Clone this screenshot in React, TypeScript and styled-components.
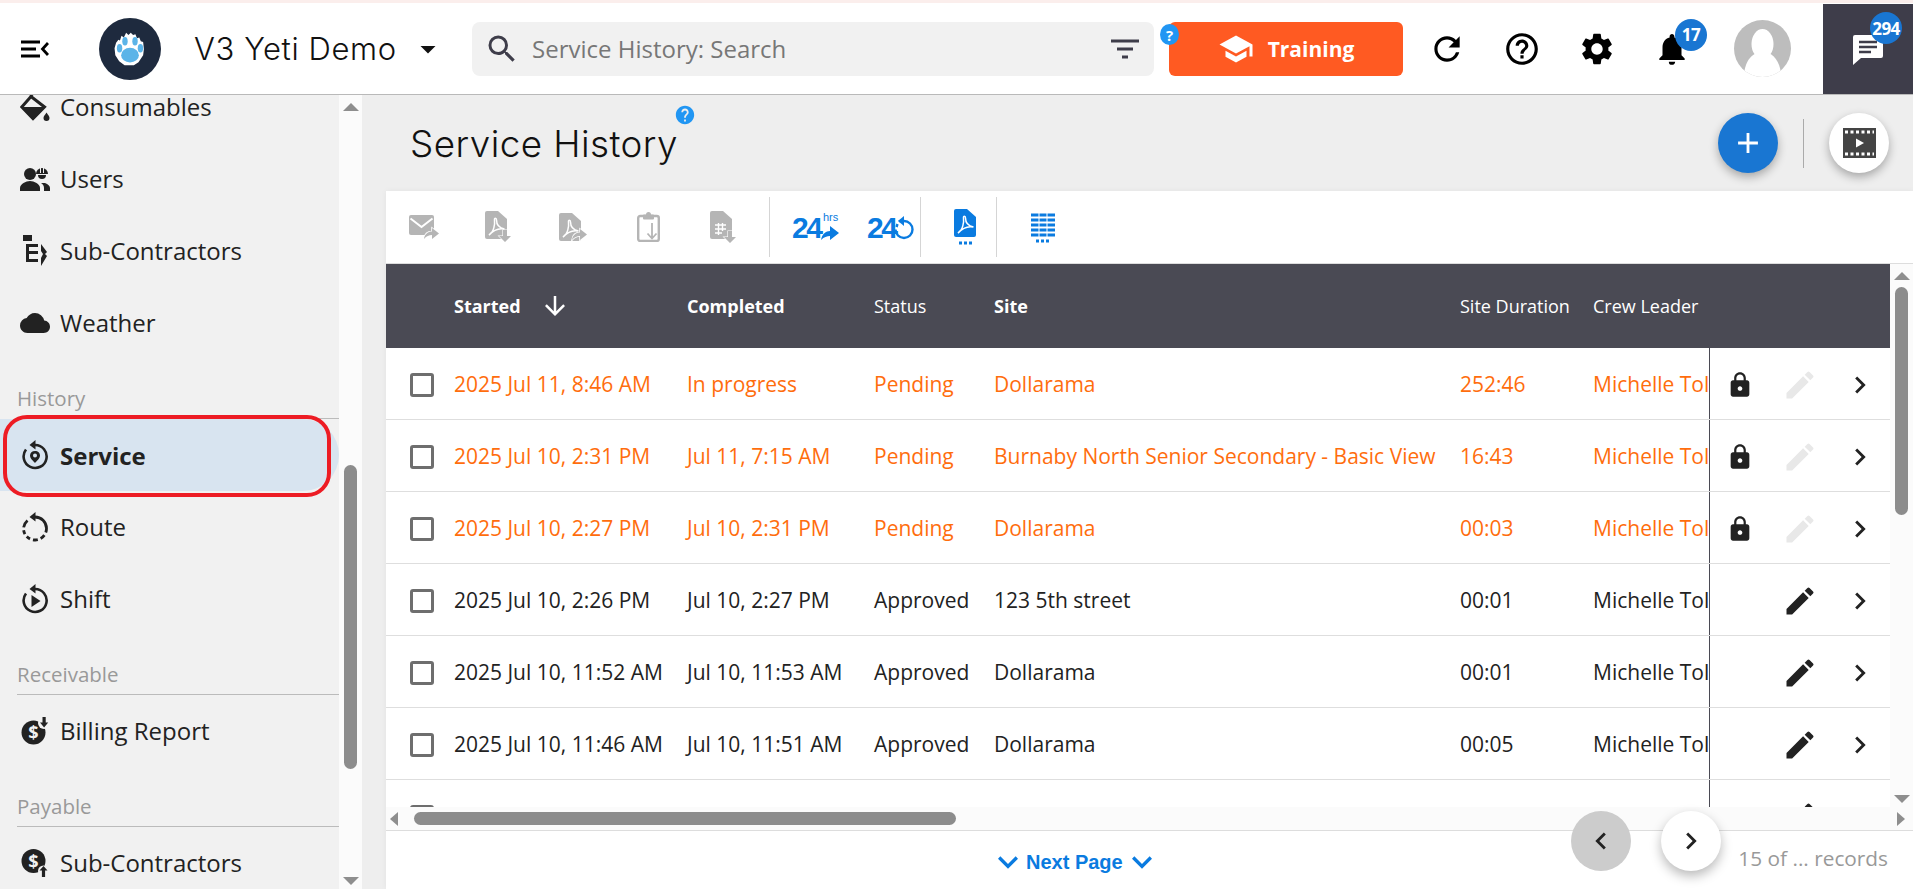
import React from 'react';
import styled, { createGlobalStyle } from 'styled-components';
import {
  MdAdd,
  MdArrowDownward,
  MdChevronLeft,
  MdChevronRight,
  MdCloud,
  MdEdit,
  MdHelp,
  MdHelpOutline,
  MdKeyboardArrowDown,
  MdLock,
  MdNotifications,
  MdRefresh,
  MdSchool,
  MdSearch,
  MdSettings,
  MdArrowDropDown,
} from 'react-icons/md';

const GlobalStyle = createGlobalStyle`
  html, body {
    margin: 0;
    padding: 0;
    height: 889px;
    overflow: hidden;
    background: #eeeeee;
    font-family: "Open Sans", "Liberation Sans", sans-serif;
  }
  * { box-sizing: border-box; }
`;

const Page = styled.div`
  width: 1913px;
  height: 889px;
  display: flex;
  flex-direction: column;
  overflow: hidden;
`;

const TopStrip = styled.div`
  height: 3px;
  background: #fbeeec;
  flex: none;
`;

const Header = styled.header`
  height: 92px;
  flex: none;
  display: flex;
  align-items: center;
  background: #fff;
  border-bottom: 1px solid #b9b9b9;
  position: relative;
`;

const MenuButton = styled.div`
  width: 99px;
  padding-left: 21px;
  display: flex;
  align-items: center;
`;

const Logo = styled.div`
  width: 62px;
  height: 62px;
  border-radius: 50%;
  background: #1e2a3e;
  display: flex;
  align-items: center;
  justify-content: center;
  flex: none;
`;

const OrgName = styled.div`
  margin-left: 33px;
  width: 202px;
  font-family: Inter, "Open Sans", sans-serif;
  font-size: 31px;
  font-weight: 300;
  letter-spacing: 0.6px;
  color: #111;
  white-space: nowrap;
`;

const OrgCaret = styled.div`
  width: 76px;
  padding-left: 14px;
  display: flex;
  color: #111;
`;

const SearchBox = styled.div`
  width: 682px;
  height: 54px;
  border-radius: 8px;
  background: #f1f1f1;
  display: flex;
  align-items: center;
  padding: 0 15px 0 12px;
  color: #3e3d4a;
`;

const SearchText = styled.span`
  margin-left: 12px;
  flex: 1;
  font-size: 24px;
  color: #777;
`;

const HelpDot = styled.div`
  width: 19px;
  height: 21px;
  border-radius: 50%;
  background: #2196f3;
  color: #fff;
  font-size: 15px;
  font-weight: 700;
  display: flex;
  align-items: center;
  justify-content: center;
  position: absolute;
  left: 1160px;
  top: 21px;
  z-index: 2;
`;

const TrainingButton = styled.div`
  margin-left: 15px;
  width: 234px;
  height: 54px;
  border-radius: 6px;
  background: #ff5a22;
  color: #fff;
  display: flex;
  align-items: center;
  justify-content: center;
  gap: 14px;
  font-size: 21px;
  font-weight: 700;
`;

const HeaderIcons = styled.div`
  display: flex;
  align-items: center;
  margin-left: 6px;
`;

const HeaderIcon = styled.div`
  width: 75px;
  height: 54px;
  display: flex;
  align-items: center;
  justify-content: center;
  color: #000;
  position: relative;
`;

const Badge = styled.span`
  position: absolute;
  width: 32px;
  height: 32px;
  border-radius: 50%;
  background: #1976d2;
  color: #fff;
  font-size: 17px;
  font-weight: 700;
  letter-spacing: -0.5px;
  display: flex;
  align-items: center;
  justify-content: center;
  left: ${({ $left }: { $left: number; $top: number }) => $left}px;
  top: ${({ $top }: { $left: number; $top: number }) => $top}px;
`;

const Avatar = styled.div`
  width: 57px;
  height: 57px;
  margin-left: 25px;
  border-radius: 50%;
  background: #bdbdbd;
  overflow: hidden;
  flex: none;
`;

const ChatBox = styled.div`
  position: absolute;
  right: 0;
  top: 1px;
  bottom: 0;
  width: 90px;
  background: #3e3d4a;
  color: #fff;
  display: flex;
  align-items: center;
  justify-content: center;
`;

const Shell = styled.div`
  flex: 1;
  display: flex;
  min-height: 0;
`;

const Sidebar = styled.aside`
  width: 362px;
  flex: none;
  display: flex;
  background: #f1f1f1;
`;

const NavList = styled.nav`
  width: 339px;
  overflow: hidden;
`;

const NavInner = styled.div`
  margin-top: -24px;
`;

const NavRow = styled.div<{ $active?: boolean }>`
  height: 72px;
  display: flex;
  align-items: center;
  gap: 10px;
  padding-left: 20px;
  font-size: 24px;
  color: #222;
  position: relative;
  font-weight: ${({ $active }) => ($active ? 700 : 400)};
  background: ${({ $active }) => ($active ? '#d8e4f0' : 'transparent')};
  border-radius: ${({ $active }) => ($active ? '0 36px 36px 0' : '0')};
`;

const NavLabel = styled.span<{ $active?: boolean }>`
  margin-top: ${({ $active }) => ($active ? 0 : -2)}px;
`;

const RedMark = styled.span`
  position: absolute;
  left: 3px;
  top: -4px;
  width: 328px;
  height: 82px;
  border: 4px solid #ed1c24;
  border-radius: 24px;
`;

const NavIcon = styled.span`
  width: 30px;
  height: 30px;
  flex: none;
  display: flex;
  align-items: center;
  justify-content: center;
  color: #222;
`;

const NavSection = styled.div`
  height: 60px;
  margin-left: 17px;
  padding-bottom: 6px;
  display: flex;
  align-items: flex-end;
  font-size: 20.5px;
  color: #999;
  border-bottom: 1px solid #bbb;
`;

const ScrollTrack = styled.div<{ $vertical?: boolean }>`
  background: #fbfbfb;
  display: flex;
  flex-direction: ${({ $vertical }) => ($vertical ? 'column' : 'row')};
  align-items: center;
  flex: none;
`;

const SideTrack = styled(ScrollTrack)`
  width: 23px;
  height: 794px;
`;

const CardTrack = styled(ScrollTrack)`
  width: 23px;
  height: 543px;
`;

const Arrow = styled.span<{ $dir: 'up' | 'down' | 'left' | 'right' }>`
  width: 0;
  height: 0;
  flex: none;
  border-style: solid;
  border-color: transparent;
  border-width: ${({ $dir }) => ($dir === 'up' || $dir === 'down' ? '0 8px' : '7px 0')};
  ${({ $dir }) => `border-${{ up: 'bottom', down: 'top', left: 'right', right: 'left' }[$dir]}: 8px solid #8e8e8e;`}
`;

const Thumb = styled.span`
  background: #8c8c8c;
  border-radius: 7px;
  flex: none;
`;

const SideThumb = styled(Thumb)`
  width: 13px;
  height: 304px;
  margin-top: 354px;
`;

const TopArrow = styled(Arrow)`
  margin-top: 8px;
`;

const BottomArrow = styled(Arrow)`
  margin-top: auto;
  margin-bottom: 4px;
`;

const CardThumb = styled(Thumb)`
  width: 13px;
  height: 228px;
  margin-top: 7px;
`;

const Main = styled.main`
  flex: 1;
  min-width: 0;
  display: flex;
  flex-direction: column;
`;

const TitleBar = styled.div`
  height: 96px;
  flex: none;
  display: flex;
  align-items: center;
  padding: 0 24px 0 48px;
`;

const Title = styled.h1`
  margin: 0;
  font-family: Inter, "Open Sans", sans-serif;
  font-size: 36.8px;
  font-weight: 300;
  letter-spacing: 0.45px;
  color: #111;
`;

const TitleHelp = styled.span`
  align-self: flex-start;
  margin: 9px 0 0 -4px;
  display: flex;
  color: #2196f3;
`;

const TitleActions = styled.div`
  margin-left: auto;
  display: flex;
  align-items: center;
`;

const RoundButton = styled.div<{ $blue?: boolean }>`
  width: 60px;
  height: 60px;
  border-radius: 50%;
  display: flex;
  align-items: center;
  justify-content: center;
  background: ${({ $blue }) => ($blue ? '#1976d2' : '#fff')};
  color: ${({ $blue }) => ($blue ? '#fff' : '#444')};
  box-shadow: 0 4px 10px rgba(0, 0, 0, 0.3);
`;

const TitleDivider = styled.span`
  width: 1px;
  height: 49px;
  background: #aaa;
  margin: 0 25px;
`;

const Card = styled.section`
  flex: 1;
  margin-left: 24px;
  background: #fff;
  display: flex;
  flex-direction: column;
  min-height: 0;
  box-shadow: 0 0 6px rgba(0, 0, 0, 0.05);
`;

const Toolbar = styled.div`
  height: 73px;
  flex: none;
  display: flex;
  align-items: center;
  border-bottom: 1px solid #ddd;
`;

const ToolSlot = styled.div<{ $width: number; $margin?: number }>`
  width: ${({ $width }) => $width}px;
  margin-left: ${({ $margin }) => $margin || 0}px;
  display: flex;
  justify-content: center;
  flex: none;
`;

const ToolSeparator = styled.span`
  width: 1px;
  height: 60px;
  background: #d5d5d5;
  flex: none;
`;

const GapSeparator = styled(ToolSeparator)`
  margin-left: 7px;
`;

const TableArea = styled.div`
  height: 543px;
  flex: none;
  display: flex;
`;

const Table = styled.div`
  flex: 1;
  min-width: 0;
  overflow: hidden;
`;

const gridColumns = '68px 233px 187px 120px 466px 133px 116px 181px';

const HeadRow = styled.div`
  display: grid;
  grid-template-columns: ${gridColumns};
  height: 84px;
  align-items: center;
  background: #4a4a54;
  color: #fff;
  font-size: 18px;
`;

const HeadCell = styled.div<{ $bold?: boolean }>`
  font-weight: ${({ $bold }) => ($bold ? 700 : 400)};
  display: flex;
  align-items: center;
  gap: 19px;
  white-space: nowrap;
`;

const BodyRow = styled.div<{ $pending?: boolean }>`
  display: grid;
  grid-template-columns: ${gridColumns};
  height: 72px;
  align-items: center;
  font-size: 21px;
  white-space: nowrap;
  color: ${({ $pending }) => ($pending ? '#ff6d0d' : '#222')};
  border-bottom: 1px solid #dedede;
`;

const CheckCell = styled.div`
  display: flex;
  justify-content: flex-end;
  padding: 2px 20px 0 0;
`;

const Checkbox = styled.span`
  width: 24px;
  height: 24px;
  border: 3px solid #6e6e6e;
  border-radius: 3px;
  display: block;
`;

const CrewCell = styled.div`
  overflow: hidden;
`;

const ActionCell = styled.div`
  height: 100%;
  display: grid;
  grid-template-columns: 60px 60px 60px;
  align-items: center;
  justify-items: center;
  border-left: 1px solid #4a4a54;
  color: #222;
`;

const MutedIcon = styled.span<{ $off?: boolean }>`
  display: flex;
  margin-top: 2px;
  color: ${({ $off }) => ($off ? '#e8e8e8' : '#222')};
`;

const HScroll = styled(ScrollTrack)`
  height: 24px;
  padding: 0 6px 0 2px;
  border-bottom: 1px solid #ddd;
`;

const HThumb = styled(Thumb)`
  width: 542px;
  height: 13px;
  margin-left: 16px;
`;

const RightArrow = styled(Arrow)`
  margin-left: auto;
  margin-right: 2px;
`;

const LeftArrow = styled(Arrow)`
  margin-left: 2px;
`;

const Footer = styled.div`
  flex: 1;
  display: flex;
  align-items: center;
  position: relative;
  padding-left: 603px;
`;

const NextPage = styled.div`
  display: flex;
  align-items: center;
  gap: 0;
  margin-top: 4px;
  color: #0a7be0;
  font-family: "Liberation Sans", Arial, sans-serif;
  font-weight: 700;
  font-size: 20px;
`;

const NextChevron = styled.span`
  display: flex;
  margin: 0 -2px 0 -1px;
`;

const Records = styled.div`
  margin-left: auto;
  margin-right: 25px;
  margin-top: -5px;
  font-size: 20.8px;
  color: #999;
`;

const PageButton = styled.div<{ $off?: boolean; $left: number }>`
  position: absolute;
  top: -20px;
  left: ${({ $left }) => $left}px;
  width: 60px;
  height: 60px;
  border-radius: 50%;
  display: flex;
  align-items: center;
  justify-content: center;
  color: #222;
  background: ${({ $off }) => ($off ? '#cccccc' : '#ffffff')};
  box-shadow: ${({ $off }) => ($off ? 'none' : '0 5px 12px rgba(0, 0, 0, 0.28)')};
`;

const CircleArrow = ({ variant }: { variant: 'pin' | 'dash' | 'play' }) => (
  <svg width="28" height="30" viewBox="0 0 28 30" fill="none">
    {variant === 'dash' ? (
      <path
        d="M14 5a11.500 11.500 0 1 1-11.500 12a11.500 11.500 0 0 1 4-8.500"
        stroke="#222"
        strokeWidth="2.800"
        strokeDasharray="22 3 5 3 5 3 4 3 4 3"
      />
    ) : (
      <path d="M14 5a11.500 11.500 0 1 1-9 4.500" stroke="#222" strokeWidth="2.600" />
    )}
    <path d="M14.500 0v9.500L8.500 5z" fill="#222" />
    {variant === 'pin' && (
      <path
        d="M14 11c-3 0-5 2-5 4.600 0 3 3.400 5.600 5 7.400 1.600-1.800 5-4.400 5-7.400 0-2.600-2-4.600-5-4.600zm0 6.600a2 2 0 1 1 0-4 2 2 0 0 1 0 4z"
        fill="#222"
      />
    )}
    {variant === 'play' && <path d="M10.500 11l9 6-9 6z" fill="#222" />}
  </svg>
);

const BucketIcon = () => (
  <svg width="30" height="30" viewBox="0 0 30 30">
    <path d="M9.500 1l3 3" stroke="#222" strokeWidth="3" />
    <path d="M11 4.500L1.800 15 13 26.500 24.500 15z" fill="none" stroke="#222" strokeWidth="3" />
    <path d="M1 15h24L13 28z" fill="#222" />
    <path d="M26.500 20.500c-1.600 2.500-3 3.800-3 5.500a3 3 0 0 0 6 0c0-1.700-1.400-3-3-5.500z" fill="#222" />
  </svg>
);

const UsersIcon = () => (
  <svg width="30" height="24" viewBox="0 0 30 24">
    <circle cx="10" cy="7" r="6" fill="#222" />
    <path d="M0 24v-3c0-4 6-7 10-7s10 3 10 7v3z" fill="#222" />
    <path d="M16 7a6 6 0 0 1 12 0z" fill="#222" />
    <path d="M18 8h8a4 4 0 0 1-8 0zM24 21v3h6v-3c0-2-2-4-5-5-1 0-3 0-4 0 2 1 3 3 3 5z" fill="#222" />
    <path d="M20.500 1v5M23.500 1v5" stroke="#f1f1f1" strokeWidth="1" />
  </svg>
);

const HierarchyIcon = () => (
  <svg width="26" height="32" viewBox="0 0 26 32">
    <rect x="1" y="0" width="9" height="6" fill="#222" />
    <path d="M4 9h12v3H7v4h9v3H7v5h9v3H4z" fill="#222" />
    <path d="M19 9l6 8-2 2 2 2-6 10v-8l2-4-2-3z" fill="#222" />
  </svg>
);

const MoneyIcon = ({ up }: { up?: boolean }) => (
  <svg width="28" height="28" viewBox="0 0 28 28">
    <circle cx="12.500" cy={up ? 12 : 15.500} r="12" fill="#222" />
    <text x="12.500" y={up ? 18.500 : 22} textAnchor="middle" fontSize="18" fontWeight="700" fill="#f1f1f1" fontFamily="Open Sans">
      $
    </text>
    {up ? (
      <>
        <circle cx="22.500" cy="22" r="5.500" fill="#f1f1f1" />
        <path d="M22.500 17l4 4.500h-2.400V28h-3.200v-6.500H18.500z" fill="#222" />
      </>
    ) : (
      <>
        <circle cx="23" cy="6" r="6" fill="#f1f1f1" />
        <path d="M21.500 0h3.200v5.500h2.500l-4.100 5-4.100-5h2.500z" fill="#222" />
      </>
    )}
  </svg>
);

const FileBody = ({ fill }: { fill: string }) => (
  <path d="M2 0h11l9 8v18a2 2 0 0 1-2 2H2a2 2 0 0 1-2-2V2a2 2 0 0 1 2-2z" fill={fill} />
);

const Swirl = ({ color }: { color: string }) => (
  <path d="M4 24c5-3 6-11 5.500-15-.3-2.500 2-2.500 2 0 0 5 3 8 8 9-5-1-11 1-15.500 6z" fill="none" stroke={color} strokeWidth="1.500" />
);

const GRAY = '#b5b5b5';
const BLUE = '#0a7be0';

const ShareMark = ({ x, y }: { x: number; y: number }) => (
  <path
    d={`M${x} ${y + 11}c.6-5 4-7.500 8-7.500V${y}l7 5.500-7 5.500V${y + 7}c-3 0-5.500 1-8 4z`}
    fill={GRAY}
    stroke="#fff"
    strokeWidth="1.500"
    paintOrder="stroke"
  />
);

const DownMark = ({ x, y }: { x: number; y: number }) => (
  <path d={`M${x + 3} ${y}h4v6h4l-6 6-6-6h4z`} fill={GRAY} stroke="#fff" strokeWidth="1.200" paintOrder="stroke" />
);

const MailTool = () => (
  <svg width="31" height="25" viewBox="0 0 31 25">
    <rect x="0" y="0" width="25" height="20" rx="2" fill={GRAY} />
    <path d="M1.500 3.500L12.500 12l11-8.500" fill="none" stroke="#fff" strokeWidth="2" />
    <ShareMark x={15} y={13} />
  </svg>
);

const PdfDownTool = () => (
  <svg width="28" height="32" viewBox="0 0 28 32">
    <FileBody fill={GRAY} />
    <Swirl color="#fff" />
    <DownMark x={15} y={19} />
  </svg>
);

const PdfShareTool = () => (
  <svg width="30" height="28" viewBox="0 0 30 28">
    <FileBody fill={GRAY} />
    <Swirl color="#fff" />
    <ShareMark x={13} y={16} />
  </svg>
);

const ClipboardTool = () => (
  <svg width="24" height="30" viewBox="0 0 24 30">
    <rect x="1.200" y="4" width="20.600" height="25" rx="2" fill="none" stroke={GRAY} strokeWidth="2.400" />
    <rect x="6" y="2.500" width="11" height="5" rx="1" fill={GRAY} />
    <circle cx="11.500" cy="2.500" r="2.500" fill={GRAY} />
    <path d="M15 11v15M10.500 21.500l4.500 5 4.500-5" fill="none" stroke={GRAY} strokeWidth="1.800" />
  </svg>
);

const SheetTool = () => (
  <svg width="28" height="33" viewBox="0 0 28 33">
    <FileBody fill={GRAY} />
    <path d="M5 14h11M5 18h11M5 22h7M8.500 12v12M12.500 12v8" stroke="#fff" strokeWidth="1.400" />
    <DownMark x={15} y={20} />
  </svg>
);

const HoursTool = () => (
  <svg width="48" height="40" viewBox="0 0 48 40">
    <text x="0" y="31" fontSize="30" fontWeight="700" letterSpacing="-2.500" fill={BLUE} fontFamily="Liberation Sans">
      24
    </text>
    <text x="31" y="14" fontSize="11" fill={BLUE} fontFamily="Liberation Sans">
      hrs
    </text>
    <path d="M29 33c1-6 5-9 9-9v-5l9 7-9 7v-4c-3 0-6 1-9 4z" fill={BLUE} />
  </svg>
);

const CycleTool = () => (
  <svg width="48" height="40" viewBox="0 0 48 40">
    <text x="0" y="31" fontSize="30" fontWeight="700" letterSpacing="-2.500" fill={BLUE} fontFamily="Liberation Sans">
      24
    </text>
    <path d="M37 14a8.500 8.500 0 1 1-8.500 8.500" fill="none" stroke={BLUE} strokeWidth="2.400" />
    <path d="M29.500 20l1-3M32 14.500l2-1" stroke={BLUE} strokeWidth="2.400" />
    <path d="M37 9v10l-6-5z" fill={BLUE} />
  </svg>
);

const PdfFileTool = () => (
  <svg width="24" height="38" viewBox="0 0 24 38">
    <g transform="translate(0 1)">
      <FileBody fill={BLUE} />
      <Swirl color="#fff" />
    </g>
    <path d="M5 35h3M10 35h3M15 35h3" stroke={BLUE} strokeWidth="3" />
  </svg>
);

const TableTool = () => (
  <svg width="24" height="32" viewBox="0 0 24 32">
    <path d="M0 4h24M0 9h24M0 14h24M0 19h24M0 24h24" stroke={BLUE} strokeWidth="3" />
    <path d="M8 2v24M16 2v24" stroke="#fff" strokeWidth="1" />
    <path d="M5 30h3M10 30h3M15 30h3" stroke={BLUE} strokeWidth="3" />
  </svg>
);

const MenuIcon = () => (
  <svg width="28" height="18" viewBox="0 0 28 18">
    <path d="M0 2h19M0 9h15M0 16h19" stroke="#000" strokeWidth="3.200" />
    <path d="M27 3l-5.500 6 5.500 6" fill="none" stroke="#000" strokeWidth="2.800" />
  </svg>
);

const PawIcon = () => (
  <svg width="36" height="34" viewBox="0 0 46 44">
    <path d="M5 14l3-4 2 1 2-6 3 2 3-6 3 3 3-3 3 3 3-1 2 5 3-1 2 5 3 1 1 9-1 8-6 9-6 4H16l-7-5-5-8-1-9z" fill="#fff" />
    <ellipse cx="23" cy="30" rx="11.500" ry="9.500" fill="#5bb4e8" />
    <ellipse cx="9.500" cy="21" rx="3.500" ry="5.500" fill="#5bb4e8" />
    <ellipse cx="16.500" cy="12" rx="3.500" ry="5.500" fill="#5bb4e8" />
    <ellipse cx="29.500" cy="12" rx="3.500" ry="5.500" fill="#5bb4e8" />
    <ellipse cx="36.500" cy="21" rx="3.500" ry="5.500" fill="#5bb4e8" />
  </svg>
);

const FilterIcon = () => (
  <svg width="28" height="20" viewBox="0 0 28 20">
    <path d="M0 2h28M6 10h16M11 18h6" stroke="#3e3d4a" strokeWidth="3" />
  </svg>
);

const AvatarFigure = () => (
  <svg width="57" height="57" viewBox="0 0 57 57">
    <ellipse cx="28.500" cy="24" rx="11" ry="15" fill="#fff" />
    <path d="M10 57c0-14 7-25 18.500-25S47 43 47 57z" fill="#fff" />
  </svg>
);

const ChatIcon = () => (
  <svg width="32" height="32" viewBox="0 0 32 32">
    <path d="M3 2h26a2 2 0 0 1 2 2v19a2 2 0 0 1-2 2H9l-8 7V4a2 2 0 0 1 2-2z" fill="#fff" />
    <path d="M7 9h18M7 14h18M7 19h12" stroke="#3e3d4a" strokeWidth="2.400" />
  </svg>
);

const FilmIcon = () => (
  <svg width="33" height="30" viewBox="0 0 33 30">
    <rect x="0" y="0" width="33" height="30" fill="#444" />
    <path d="M2 4h29M2 26h29" stroke="#fff" strokeWidth="3" strokeDasharray="3 2.500" />
    <path d="M13 10.500l8 4.500-8 4.500z" fill="#fff" />
  </svg>
);

type Row = {
  started: string;
  completed: string;
  status: string;
  site: string;
  duration: string;
};

const pendingRows: Row[] = [
  { started: '2025 Jul 11, 8:46 AM', completed: 'In progress', status: 'Pending', site: 'Dollarama', duration: '252:46' },
  { started: '2025 Jul 10, 2:31 PM', completed: 'Jul 11, 7:15 AM', status: 'Pending', site: 'Burnaby North Senior Secondary - Basic View', duration: '16:43' },
  { started: '2025 Jul 10, 2:27 PM', completed: 'Jul 10, 2:31 PM', status: 'Pending', site: 'Dollarama', duration: '00:03' },
];

const approvedRows: Row[] = [
  { started: '2025 Jul 10, 2:26 PM', completed: 'Jul 10, 2:27 PM', status: 'Approved', site: '123 5th street', duration: '00:01' },
  { started: '2025 Jul 10, 11:52 AM', completed: 'Jul 10, 11:53 AM', status: 'Approved', site: 'Dollarama', duration: '00:01' },
  { started: '2025 Jul 10, 11:46 AM', completed: 'Jul 10, 11:51 AM', status: 'Approved', site: 'Dollarama', duration: '00:05' },
];

const ServiceRow = ({ row, pending }: { row: Row; pending?: boolean }) => (
  <BodyRow $pending={pending}>
    <CheckCell>
      <Checkbox />
    </CheckCell>
    <div>{row.started}</div>
    <div>{row.completed}</div>
    <div>{row.status}</div>
    <div>{row.site}</div>
    <div>{row.duration}</div>
    <CrewCell>Michelle Tol</CrewCell>
    <ActionCell>
      <MutedIcon>{pending && <MdLock size={28} />}</MutedIcon>
      <MutedIcon $off={pending}>
        <MdEdit size={36} />
      </MutedIcon>
      <MutedIcon>
        <MdChevronRight size={34} />
      </MutedIcon>
    </ActionCell>
  </BodyRow>
);

export default function App() {
  return (
    <Page>
      <GlobalStyle />
      <TopStrip />
      <Header>
        <MenuButton>
          <MenuIcon />
        </MenuButton>
        <Logo>
          <PawIcon />
        </Logo>
        <OrgName>V3 Yeti Demo</OrgName>
        <OrgCaret>
          <MdArrowDropDown size={36} />
        </OrgCaret>
        <SearchBox>
          <MdSearch size={36} />
          <SearchText>Service History: Search</SearchText>
          <FilterIcon />
        </SearchBox>
        <HelpDot>?</HelpDot>
        <TrainingButton>
          <MdSchool size={36} />
          Training
        </TrainingButton>
        <HeaderIcons>
          <HeaderIcon>
            <MdRefresh size={38} />
          </HeaderIcon>
          <HeaderIcon>
            <MdHelpOutline size={38} />
          </HeaderIcon>
          <HeaderIcon>
            <MdSettings size={38} />
          </HeaderIcon>
          <HeaderIcon>
            <MdNotifications size={38} />
            <Badge $left={41} $top={-3}>
              17
            </Badge>
          </HeaderIcon>
        </HeaderIcons>
        <Avatar>
          <AvatarFigure />
        </Avatar>
        <ChatBox>
          <ChatIcon />
          <Badge $left={47} $top={8}>
            294
          </Badge>
        </ChatBox>
      </Header>
      <Shell>
        <Sidebar>
          <NavList>
            <NavInner>
              <NavRow>
                <NavIcon>
                  <BucketIcon />
                </NavIcon>
                <NavLabel>Consumables</NavLabel>
              </NavRow>
              <NavRow>
                <NavIcon>
                  <UsersIcon />
                </NavIcon>
                <NavLabel>Users</NavLabel>
              </NavRow>
              <NavRow>
                <NavIcon>
                  <HierarchyIcon />
                </NavIcon>
                <NavLabel>Sub-Contractors</NavLabel>
              </NavRow>
              <NavRow>
                <NavIcon>
                  <MdCloud size={32} />
                </NavIcon>
                <NavLabel>Weather</NavLabel>
              </NavRow>
              <NavSection>History</NavSection>
              <NavRow $active>
                <NavIcon>
                  <CircleArrow variant="pin" />
                </NavIcon>
                <NavLabel $active>Service</NavLabel>
                <RedMark />
              </NavRow>
              <NavRow>
                <NavIcon>
                  <CircleArrow variant="dash" />
                </NavIcon>
                <NavLabel>Route</NavLabel>
              </NavRow>
              <NavRow>
                <NavIcon>
                  <CircleArrow variant="play" />
                </NavIcon>
                <NavLabel>Shift</NavLabel>
              </NavRow>
              <NavSection>Receivable</NavSection>
              <NavRow>
                <NavIcon>
                  <MoneyIcon />
                </NavIcon>
                <NavLabel>Billing Report</NavLabel>
              </NavRow>
              <NavSection>Payable</NavSection>
              <NavRow>
                <NavIcon>
                  <MoneyIcon up />
                </NavIcon>
                <NavLabel>Sub-Contractors</NavLabel>
              </NavRow>
            </NavInner>
          </NavList>
          <SideTrack $vertical>
            <TopArrow $dir="up" />
            <SideThumb />
            <BottomArrow $dir="down" />
          </SideTrack>
        </Sidebar>
        <Main>
          <TitleBar>
            <Title>Service History</Title>
            <TitleHelp>
              <MdHelp size={22} />
            </TitleHelp>
            <TitleActions>
              <RoundButton $blue>
                <MdAdd size={34} />
              </RoundButton>
              <TitleDivider />
              <RoundButton>
                <FilmIcon />
              </RoundButton>
            </TitleActions>
          </TitleBar>
          <Card>
            <Toolbar>
              <ToolSlot $width={76}>
                <MailTool />
              </ToolSlot>
              <ToolSlot $width={74}>
                <PdfDownTool />
              </ToolSlot>
              <ToolSlot $width={76}>
                <PdfShareTool />
              </ToolSlot>
              <ToolSlot $width={74}>
                <ClipboardTool />
              </ToolSlot>
              <ToolSlot $width={76}>
                <SheetTool />
              </ToolSlot>
              <GapSeparator />
              <ToolSlot $width={92}>
                <HoursTool />
              </ToolSlot>
              <ToolSlot $width={58}>
                <CycleTool />
              </ToolSlot>
              <ToolSeparator />
              <ToolSlot $width={60} $margin={15}>
                <PdfFileTool />
              </ToolSlot>
              <ToolSeparator />
              <ToolSlot $width={92}>
                <TableTool />
              </ToolSlot>
            </Toolbar>
            <TableArea>
              <Table>
                <HeadRow>
                  <span />
                  <HeadCell $bold>
                    Started
                    <MdArrowDownward size={30} />
                  </HeadCell>
                  <HeadCell $bold>Completed</HeadCell>
                  <HeadCell>Status</HeadCell>
                  <HeadCell $bold>Site</HeadCell>
                  <HeadCell>Site Duration</HeadCell>
                  <HeadCell>Crew Leader</HeadCell>
                  <span />
                </HeadRow>
                {pendingRows.map((row) => (
                  <ServiceRow key={row.started} row={row} pending />
                ))}
                {approvedRows.map((row) => (
                  <ServiceRow key={row.started} row={row} />
                ))}
                <BodyRow>
                  <CheckCell>
                    <Checkbox />
                  </CheckCell>
                  <span />
                  <span />
                  <span />
                  <span />
                  <span />
                  <span />
                  <ActionCell>
                    <span />
                    <MutedIcon>
                      <MdEdit size={36} />
                    </MutedIcon>
                    <span />
                  </ActionCell>
                </BodyRow>
              </Table>
              <CardTrack $vertical>
                <TopArrow $dir="up" />
                <CardThumb />
                <BottomArrow $dir="down" />
              </CardTrack>
            </TableArea>
            <HScroll>
              <LeftArrow $dir="left" />
              <HThumb />
              <RightArrow $dir="right" />
            </HScroll>
            <Footer>
              <NextPage>
                <NextChevron>
                  <MdKeyboardArrowDown size={40} />
                </NextChevron>
                Next Page
                <NextChevron>
                  <MdKeyboardArrowDown size={40} />
                </NextChevron>
              </NextPage>
              <Records>15 of ... records</Records>
              <PageButton $off $left={1185}>
                <MdChevronLeft size={34} />
              </PageButton>
              <PageButton $left={1275}>
                <MdChevronRight size={34} />
              </PageButton>
            </Footer>
          </Card>
        </Main>
      </Shell>
    </Page>
  );
}
